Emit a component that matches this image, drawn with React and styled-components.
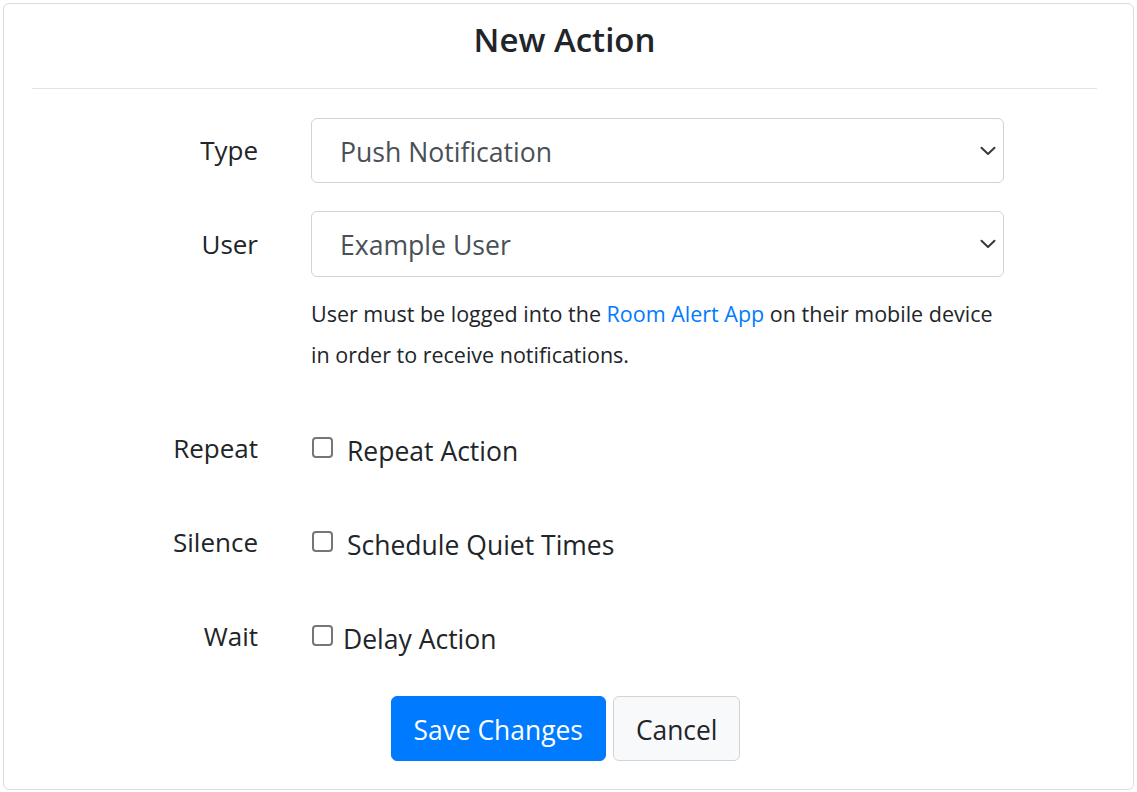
import React from "react";
import styled, { createGlobalStyle } from "styled-components";

const GlobalStyle = createGlobalStyle`
  html, body { margin: 0; padding: 0; background: #ffffff; }
  body {
    font-family: "Open Sans", "Noto Sans", Arial, sans-serif;
    color: #212529;
    -webkit-font-smoothing: antialiased;
  }
  * { box-sizing: border-box; }
`;

const Page = styled.div`
  padding: 3px;
  width: 1137px;
`;

const Card = styled.div`
  width: 1131px;
  height: 787px;
  border: 1px solid #dcdcdc;
  border-radius: 6px;
  background: #fff;
  display: flex;
  flex-direction: column;
`;

const Header = styled.div`
  padding: 12px 8px 24px 0;
  display: flex;
  justify-content: center;
`;

const Title = styled.h5`
  margin: 0;
  font-size: 33px;
  line-height: 48px;
  font-weight: 600;
  color: #212529;
`;

const Divider = styled.hr`
  margin: 0 36px 0 28px;
  border: 0;
  border-top: 1px solid #e3e3e3;
  height: 0;
`;

const Form = styled.form`
  padding-top: 29px;
  display: flex;
  flex-direction: column;
`;

const Row = styled.div`
  display: grid;
  grid-template-columns: 254px 693px;
  column-gap: 53px;
  align-items: center;
  min-height: ${(p) => p.$height || 0}px;
  margin-bottom: ${(p) => p.$mb || 0}px;
`;

const Label = styled.label`
  text-align: right;
  font-size: 26px;
  line-height: 1.2;
  padding-top: 1px;
  color: #212529;
`;

const SelectWrap = styled.div`
  position: relative;
  height: ${(p) => p.$h || 65}px;
`;

const Select = styled.select`
  appearance: none;
  -webkit-appearance: none;
  width: 100%;
  height: 100%;
  border: 1px solid #ced4da;
  border-radius: 6px;
  background: #fff;
  padding: 2px 40px 0 28px;
  font-family: inherit;
  font-size: 26.6px;
  color: #495057;
  outline: none;
`;

const Chevron = styled.svg`
  position: absolute;
  right: 8px;
  top: 50%;
  width: 16px;
  height: 10px;
  margin-top: -5px;
  pointer-events: none;
`;

const Help = styled.p`
  grid-column: 2;
  margin: 0;
  font-size: 21.5px;
  line-height: 41px;
  color: #212529;
`;

const Link = styled.a`
  color: #007bff;
  text-decoration: none;
`;

const Check = styled.label`
  display: flex;
  align-items: center;
  gap: ${(p) => p.$gap || 14}px;
  font-size: 26.5px;
  color: #212529;
  cursor: pointer;
`;

const Box = styled.input.attrs({ type: "checkbox" })`
  appearance: none;
  -webkit-appearance: none;
  margin: 0 0 0 1px;
  width: 21px;
  height: 21px;
  border: 2px solid #767676;
  border-radius: 4px;
  background: #fff;
  flex: none;
`;

const CheckText = styled.span`
  margin-top: 8px;
  line-height: 1.2;
`;

const Footer = styled.div`
  display: flex;
  justify-content: center;
  gap: 7px;
  padding-right: 6px;
  margin-top: 13px;
`;

const Button = styled.button`
  height: 65px;
  padding: 3px 22px 0;
  border-radius: 6px;
  font-family: inherit;
  font-size: 26.4px;
  line-height: 1;
  cursor: pointer;
  border: 1px solid ${(p) => (p.$primary ? "#007bff" : "#d3d4d5")};
  background: ${(p) => (p.$primary ? "#007bff" : "#f8f9fa")};
  color: ${(p) => (p.$primary ? "#ffffff" : "#212529")};
`;

const ChevronIcon = () => (
  <Chevron viewBox="0 0 16 10">
    <path d="M1.5 1.8 L8 8 L14.5 1.8" fill="none" stroke="#343a40" strokeWidth="2" strokeLinecap="round" strokeLinejoin="round" />
  </Chevron>
);

const SelectField = ({ value, h }) => (
  <SelectWrap $h={h}>
    <Select defaultValue={value}>
      <option>{value}</option>
    </Select>
    <ChevronIcon />
  </SelectWrap>
);

export default function App() {
  return (
    <>
      <GlobalStyle />
      <Page>
        <Card>
          <Header>
            <Title>New Action</Title>
          </Header>
          <Divider />
          <Form onSubmit={(e) => e.preventDefault()}>
            <Row $mb={28}>
              <Label>Type</Label>
              <SelectField value="Push Notification" />
            </Row>
            <Row $mb={16}>
              <Label>User</Label>
              <SelectField value="Example User" h={66} />
            </Row>
            <Row $mb={26}>
              <Help>
                User must be logged into the <Link href="#">Room Alert App</Link> on their mobile device in order to receive notifications.
              </Help>
            </Row>
            <Row $height={94}>
              <Label>Repeat</Label>
              <Check>
                <Box />
                <CheckText>Repeat Action</CheckText>
              </Check>
            </Row>
            <Row $height={94}>
              <Label>Silence</Label>
              <Check>
                <Box />
                <CheckText>Schedule Quiet Times</CheckText>
              </Check>
            </Row>
            <Row $height={94}>
              <Label>Wait</Label>
              <Check $gap={10}>
                <Box />
                <CheckText>Delay Action</CheckText>
              </Check>
            </Row>
            <Footer>
              <Button type="submit" $primary>Save Changes</Button>
              <Button type="button">Cancel</Button>
            </Footer>
          </Form>
        </Card>
      </Page>
    </>
  );
}
